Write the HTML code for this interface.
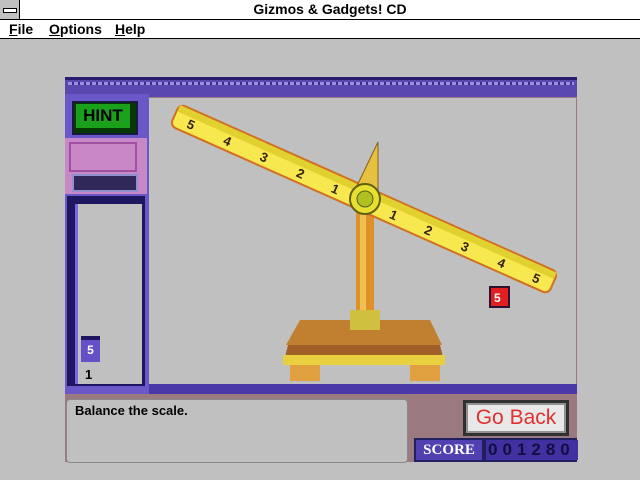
<!DOCTYPE html><html><head><style>
body{margin:0;width:640px;height:480px;background:#c0c0c0;font-family:"Liberation Sans",sans-serif;position:relative;overflow:hidden}
.a{position:absolute}
</style></head><body>
<div class="a" style="left:0;top:0;width:640px;height:19px;background:#fff;border-bottom:1px solid #000"></div>
<div class="a" style="left:0;top:0;width:19px;height:19px;background:#c0c0c0;border-right:1px solid #000"><div class="a" style="left:3px;top:8px;width:12px;height:3px;background:#fff;border:1px solid #000"></div></div>
<div class="a" style="left:20px;top:1px;width:620px;text-align:center;font-weight:bold;font-size:14px">Gizmos &amp; Gadgets! CD</div>
<div class="a" style="left:0;top:20px;width:640px;height:18px;background:#fff;border-bottom:1px solid #000;font-size:14px;font-weight:bold"><span class="a" style="left:9px;top:1px"><u>F</u>ile</span><span class="a" style="left:49px;top:1px"><u>O</u>ptions</span><span class="a" style="left:115px;top:1px"><u>H</u>elp</span></div>
<div class="a" style="left:65px;top:77px;width:512px;height:385px;background:#9a7a80"></div>
<div class="a" style="left:65px;top:77px;width:512px;height:17px;background:#5a48b0;border-top:3px solid #2a1a70"></div>
<div class="a" style="left:68px;top:82px;width:506px;height:3px;background:repeating-linear-gradient(90deg,#9c90e0 0 4px,#3c2c90 4px 6px)"></div>
<div class="a" style="left:149px;top:98px;width:427px;height:286px;background:#c0c0c0"></div>
<div class="a" style="left:65px;top:384px;width:512px;height:10px;background:#4a38a8"></div>
<div class="a" style="left:65px;top:94px;width:84px;height:300px;background:#6a58c8"></div>
<div class="a" style="left:72px;top:101px;width:62px;height:30px;background:#063806;border:2px solid #1a1a40"></div>
<div class="a" style="left:76px;top:104px;width:54px;height:24px;background:#1aa01a;font-weight:bold;font-size:17px;text-align:center;line-height:24px;color:#000">HINT</div>
<div class="a" style="left:65px;top:138px;width:82px;height:56px;background:#c888c8"></div>
<div class="a" style="left:69px;top:142px;width:64px;height:26px;border:2px solid #a050a0"></div>
<div class="a" style="left:72px;top:174px;width:62px;height:14px;background:#302858;border:2px solid #9090d0"></div>
<div class="a" style="left:67px;top:196px;width:78px;height:190px;background:#1e1660"></div>
<div class="a" style="left:75px;top:204px;width:64px;height:180px;background:#c0c0c0;border-left:3px solid #7a68d8"></div>
<div class="a" style="left:81px;top:336px;width:19px;height:22px;background:#6650c8;border-top:4px solid #1e1660;color:#fff;font-weight:bold;font-size:12px;text-align:center;line-height:20px">5</div>
<div class="a" style="left:85px;top:367px;font-weight:bold;font-size:13px">1</div>
<svg class="a" style="left:0;top:0" width="640" height="480">
<polygon points="288,345 440,345 445,365 283,365" fill="#a06028"/>
<polygon points="300,320 430,320 442,345 286,345" fill="#c08030"/>
<rect x="283" y="355" width="162" height="10" fill="#e8d040"/>
<rect x="290" y="365" width="30" height="16" fill="#e0a040"/><rect x="410" y="365" width="30" height="16" fill="#e0a040"/>
<rect x="356" y="205" width="18" height="118" fill="#e09028"/><rect x="360" y="205" width="6" height="118" fill="#f0c050"/>
<rect x="350" y="310" width="30" height="20" fill="#d0c040"/>
<g transform="translate(364,199) rotate(24)">
<rect x="-207" y="-12" width="414" height="24" rx="6" fill="#f8e850" stroke="#d07020" stroke-width="2"/>
<rect x="-206" y="-11" width="412" height="7" fill="#e0d030"/>
<g font-family="Liberation Sans" font-weight="bold" font-size="13" fill="#302010">
<text x="-192" y="7">5</text><text x="-152" y="7">4</text><text x="-112" y="7">3</text><text x="-72" y="7">2</text><text x="-34" y="7">1</text>
<text x="30" y="7">1</text><text x="68" y="7">2</text><text x="108" y="7">3</text><text x="148" y="7">4</text><text x="186" y="7">5</text></g>
</g>
<polygon points="355,190 378,142 378,200" fill="#e8c040" stroke="#806020"/>
<circle cx="365" cy="199" r="15" fill="#e8e030" stroke="#606010" stroke-width="2"/>
<circle cx="365" cy="199" r="8" fill="#b0c020" stroke="#506010"/>
<rect x="490" y="287" width="19" height="20" fill="#e02020" stroke="#301030" stroke-width="2"/>
<text x="494" y="302" font-family="Liberation Sans" font-weight="bold" font-size="12" fill="#fff">5</text>
</svg>
<div class="a" style="left:66px;top:399px;width:340px;height:62px;background:#c0c0c0;border:1px solid #888;border-radius:4px"></div>
<div class="a" style="left:75px;top:403px;font-weight:bold;font-size:13px">Balance the scale.</div>
<div class="a" style="left:463px;top:400px;width:100px;height:30px;background:#e8e8e8;border:3px solid #303030;box-shadow:inset 0 0 0 2px #909090;color:#e03030;font-size:21px;line-height:30px;text-align:center">Go Back</div>
<div class="a" style="left:414px;top:438px;width:163px;height:24px;background:#202060"></div>
<div class="a" style="left:416px;top:440px;width:66px;height:20px;background:#5040b0;color:#fff;font-family:'Liberation Serif',serif;font-weight:bold;font-size:15px;line-height:20px;text-align:center">SCORE</div>
<div class="a" style="left:486px;top:440px;width:90px;height:20px;background:#4030a0;color:#101040;font-weight:bold;font-size:17px;line-height:20px;letter-spacing:5px;padding-left:2px">001280</div>
</body></html>
